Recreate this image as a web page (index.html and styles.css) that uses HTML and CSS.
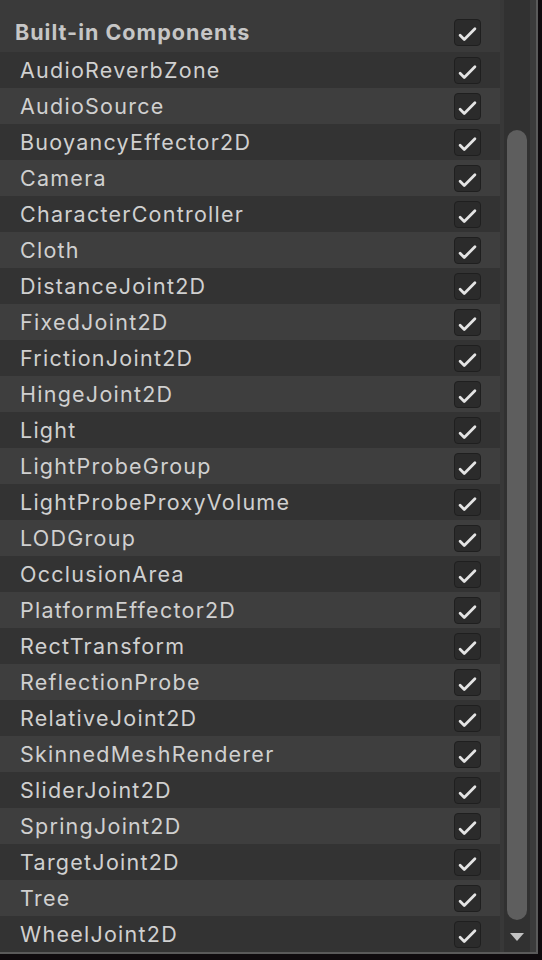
FILE: index.html
```html
<!DOCTYPE html>
<html>
<head>
<meta charset="utf-8">
<link rel="stylesheet" href="styles.css">
</head>
<body>
<div class="panel">
  <div class="list">
    <div class="header">
      <span class="title">Built-in Components</span>
      <span class="check"><svg viewBox="0 0 27 27"><path d="M5.5 16.5 L10 21 L21.5 9.5"/></svg></span>
    </div>
    <div class="rows">
      <div class="row"><span class="label">AudioReverbZone</span><span class="check"><svg viewBox="0 0 27 27"><path d="M5.5 16.5 L10 21 L21.5 9.5"/></svg></span></div>
      <div class="row"><span class="label">AudioSource</span><span class="check"><svg viewBox="0 0 27 27"><path d="M5.5 16.5 L10 21 L21.5 9.5"/></svg></span></div>
      <div class="row"><span class="label">BuoyancyEffector2D</span><span class="check"><svg viewBox="0 0 27 27"><path d="M5.5 16.5 L10 21 L21.5 9.5"/></svg></span></div>
      <div class="row"><span class="label">Camera</span><span class="check"><svg viewBox="0 0 27 27"><path d="M5.5 16.5 L10 21 L21.5 9.5"/></svg></span></div>
      <div class="row"><span class="label">CharacterController</span><span class="check"><svg viewBox="0 0 27 27"><path d="M5.5 16.5 L10 21 L21.5 9.5"/></svg></span></div>
      <div class="row"><span class="label">Cloth</span><span class="check"><svg viewBox="0 0 27 27"><path d="M5.5 16.5 L10 21 L21.5 9.5"/></svg></span></div>
      <div class="row"><span class="label">DistanceJoint2D</span><span class="check"><svg viewBox="0 0 27 27"><path d="M5.5 16.5 L10 21 L21.5 9.5"/></svg></span></div>
      <div class="row"><span class="label">FixedJoint2D</span><span class="check"><svg viewBox="0 0 27 27"><path d="M5.5 16.5 L10 21 L21.5 9.5"/></svg></span></div>
      <div class="row"><span class="label">FrictionJoint2D</span><span class="check"><svg viewBox="0 0 27 27"><path d="M5.5 16.5 L10 21 L21.5 9.5"/></svg></span></div>
      <div class="row"><span class="label">HingeJoint2D</span><span class="check"><svg viewBox="0 0 27 27"><path d="M5.5 16.5 L10 21 L21.5 9.5"/></svg></span></div>
      <div class="row"><span class="label">Light</span><span class="check"><svg viewBox="0 0 27 27"><path d="M5.5 16.5 L10 21 L21.5 9.5"/></svg></span></div>
      <div class="row"><span class="label">LightProbeGroup</span><span class="check"><svg viewBox="0 0 27 27"><path d="M5.5 16.5 L10 21 L21.5 9.5"/></svg></span></div>
      <div class="row"><span class="label">LightProbeProxyVolume</span><span class="check"><svg viewBox="0 0 27 27"><path d="M5.5 16.5 L10 21 L21.5 9.5"/></svg></span></div>
      <div class="row"><span class="label">LODGroup</span><span class="check"><svg viewBox="0 0 27 27"><path d="M5.5 16.5 L10 21 L21.5 9.5"/></svg></span></div>
      <div class="row"><span class="label">OcclusionArea</span><span class="check"><svg viewBox="0 0 27 27"><path d="M5.5 16.5 L10 21 L21.5 9.5"/></svg></span></div>
      <div class="row"><span class="label">PlatformEffector2D</span><span class="check"><svg viewBox="0 0 27 27"><path d="M5.5 16.5 L10 21 L21.5 9.5"/></svg></span></div>
      <div class="row"><span class="label">RectTransform</span><span class="check"><svg viewBox="0 0 27 27"><path d="M5.5 16.5 L10 21 L21.5 9.5"/></svg></span></div>
      <div class="row"><span class="label">ReflectionProbe</span><span class="check"><svg viewBox="0 0 27 27"><path d="M5.5 16.5 L10 21 L21.5 9.5"/></svg></span></div>
      <div class="row"><span class="label">RelativeJoint2D</span><span class="check"><svg viewBox="0 0 27 27"><path d="M5.5 16.5 L10 21 L21.5 9.5"/></svg></span></div>
      <div class="row"><span class="label">SkinnedMeshRenderer</span><span class="check"><svg viewBox="0 0 27 27"><path d="M5.5 16.5 L10 21 L21.5 9.5"/></svg></span></div>
      <div class="row"><span class="label">SliderJoint2D</span><span class="check"><svg viewBox="0 0 27 27"><path d="M5.5 16.5 L10 21 L21.5 9.5"/></svg></span></div>
      <div class="row"><span class="label">SpringJoint2D</span><span class="check"><svg viewBox="0 0 27 27"><path d="M5.5 16.5 L10 21 L21.5 9.5"/></svg></span></div>
      <div class="row"><span class="label">TargetJoint2D</span><span class="check"><svg viewBox="0 0 27 27"><path d="M5.5 16.5 L10 21 L21.5 9.5"/></svg></span></div>
      <div class="row"><span class="label">Tree</span><span class="check"><svg viewBox="0 0 27 27"><path d="M5.5 16.5 L10 21 L21.5 9.5"/></svg></span></div>
      <div class="row"><span class="label">WheelJoint2D</span><span class="check"><svg viewBox="0 0 27 27"><path d="M5.5 16.5 L10 21 L21.5 9.5"/></svg></span></div>
    </div>
  </div>
  <div class="gutter"></div>
  <div class="scrollbar">
    <div class="thumb"></div>
    <div class="arrow"><svg viewBox="0 0 14 8"><path d="M0 0 L14 0 L7 8 Z"/></svg></div>
  </div>
  <div class="edge"></div>
</div>
</body>
</html>
```
FILE: styles.css
```css
html, body {
  margin: 0;
  padding: 0;
  background: #0f0b0e;
  width: 542px;
  height: 960px;
  overflow: hidden;
}
.panel {
  display: flex;
  width: 536px;
  height: 952px;
  background: #383838;
  border-right: 2px solid #5a5a5a;
  border-bottom: 2px solid #5a5a5a;
  font-family: Inter, "Noto Sans", sans-serif;
}
.list {
  width: 500px;
  display: flex;
  flex-direction: column;
}
.header {
  height: 40px;
  padding-top: 12px;
  padding-left: 15px;
  display: flex;
  align-items: center;
  background: #3a3a3a;
}
.title {
  flex: 1;
  font-weight: 700;
  font-size: 21.5px;
  letter-spacing: 1px;
  color: #c6c6c6;
}
.rows {
  display: flex;
  flex-direction: column;
}
.row {
  height: 36px;
  padding-left: 20px;
  display: flex;
  align-items: center;
  background: #333333;
}
.row:nth-child(even) {
  background: #3e3e3e;
}
.label {
  flex: 1;
  font-size: 21.5px;
  letter-spacing: 1.25px;
  color: #d0d0d0;
}
.check {
  width: 25px;
  height: 25px;
  margin-right: 19px;
  background: #2b2b2b;
  border: 1px solid #1f1f1f;
  border-radius: 4px;
  display: flex;
}
.check svg {
  width: 25px;
  height: 25px;
}
.check path {
  fill: none;
  stroke: #e4e4e4;
  stroke-width: 3;
  stroke-linecap: round;
  stroke-linejoin: round;
}
.gutter {
  width: 4px;
}
.scrollbar {
  width: 26px;
  background: #313131;
  display: flex;
  flex-direction: column;
  align-items: center;
}
.thumb {
  width: 20px;
  height: 790px;
  margin-top: 130px;
  border-radius: 10px;
  background: #5e5e5e;
}
.arrow {
  margin-top: 13px;
  width: 14px;
  height: 8px;
  display: flex;
}
.arrow svg {
  width: 14px;
  height: 8px;
}
.arrow path {
  fill: #c2c2c2;
}
.edge {
  width: 6px;
  background: #3b3b3b;
}
```
